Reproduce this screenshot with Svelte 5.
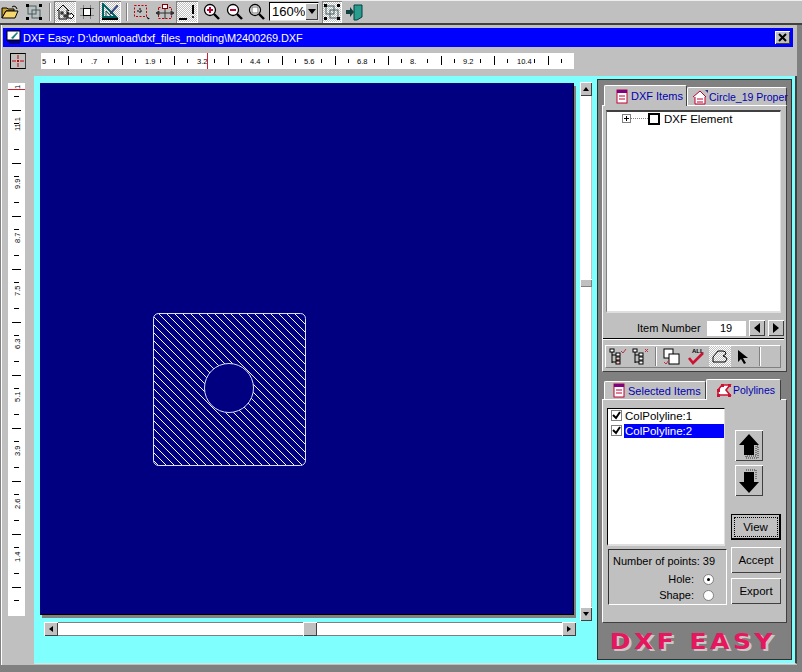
<script>
  // ruler data, all in px along the ruler
  const hLabels = [
    ['5', 1], ['.7', 50], ['1.9', 104], ['3.2', 156], ['4.4', 209], ['5.6', 263],
    ['6.8', 316], ['8.', 369], ['9.2', 422], ['10.4', 476]
  ];
  const hMajor = [27, 81, 133, 187, 241, 294, 347, 400, 453, 507];
  const vLabels = [
    ['1', 0], ['11.1', 42], ['9.9', 100], ['8.7', 154], ['7.5', 207], ['6.3', 260],
    ['5.1', 313], ['3.9', 367], ['2.6', 420], ['1.4', 473]
  ];
  const vMajor = [27, 80, 133, 186, 239, 292, 345, 398, 451, 504];
</script>

<div class="app">
  <div class="toolbar">
    <button class="tool" style="margin-left:1px" aria-label="open">
      <svg width="18" height="16" viewBox="0 0 18 16"><path d="M1 4h5l1 1h6v2H5L1 14z" fill="#c9a227" stroke="#000"/><path d="M1 14 5 7h12l-3 7z" fill="#f5d76e" stroke="#000"/><path d="M11 3q2-2 4 0l1 2" fill="none" stroke="#000"/></svg>
    </button>
    <button class="tool" style="margin-left:6px" aria-label="select">
      <svg width="18" height="18" viewBox="0 0 18 18"><rect x="3" y="3" width="8" height="8" fill="none" stroke="#406060"/><rect x="7" y="7" width="8" height="8" fill="none" stroke="#406060"/><path d="M1 1h3v3H1zM14 1h3v3h-3zM1 14h3v3H1zM14 14h3v3h-3z"/></svg>
    </button>
    <span class="sep"></span>
    <button class="tool pressed w22" style="margin-left:3px" aria-label="home">
      <svg width="18" height="18" viewBox="0 0 18 18"><path d="M1 8 7 2l6 6M3 7v9h8V7" fill="none" stroke="#000"/><rect x="5" y="9" width="2" height="2" fill="none" stroke="#000"/><rect x="8" y="12" width="2" height="2" fill="none" stroke="#000"/><path d="M12 9v2h3v-1l3 3-3 3v-1h-3z" fill="#fff" stroke="#000"/></svg>
    </button>
    <button class="tool" style="margin-left:2px" aria-label="crop">
      <svg width="14" height="14" viewBox="0 0 14 14"><rect x="3.5" y="3.5" width="7" height="7" fill="#fff" stroke="#000"/><path d="M0 3.5h3M11 3.5h3M0 10.5h3M11 10.5h3M3.5 0v3M10.5 0v3M3.5 11v3M10.5 11v3" stroke="#808080"/></svg>
    </button>
    <button class="tool pressed w22" style="margin-left:3px" aria-label="draft">
      <svg width="18" height="18" viewBox="0 0 18 18"><path d="M2 1v13h13z" fill="none" stroke="#006060" stroke-width="2"/><path d="M5 8v6h6z" fill="none" stroke="#006060"/><path d="M9 10 16 2l1 1-7 8z" fill="#3050c0" stroke="#000" stroke-width=".5"/><path d="M1 16h16" stroke="#000" stroke-width="2"/></svg>
    </button>
    <span class="sep" style="margin-left:5px"></span>
    <button class="tool" style="margin-left:5px" aria-label="region">
      <svg width="18" height="18" viewBox="0 0 18 18"><rect x="1.5" y="2.5" width="12" height="11" fill="none" stroke="#c00000" stroke-dasharray="2 1.5"/><path d="M7 5v6M4 8h6" stroke="#000" stroke-dasharray="2 1"/><path d="m13 13 4 3-2 0 1 2z"/></svg>
    </button>
    <button class="tool" style="margin-left:5px" aria-label="move">
      <svg width="18" height="18" viewBox="0 0 18 18"><rect x="2.5" y="4.5" width="13" height="11" fill="none" stroke="#c00000" stroke-dasharray="2 1.5"/><rect x="6.5" y="1.5" width="5" height="4" fill="#fff" stroke="#800000"/><path d="M0 10h18M9 6v10M0 10l3-2v4zM18 10l-3-2v4z" stroke="#303030" fill="#303030"/></svg>
    </button>
    <button class="tool pressed w22" style="margin-left:2px" aria-label="measure">
      <svg width="18" height="18" viewBox="0 0 18 18"><path d="M1 16h8" stroke="#000" stroke-width="2"/><path d="M15 2v9" stroke="#000" stroke-width="2"/><circle cx="15" cy="14" r="1" fill="#000"/></svg>
    </button>
    <button class="tool" style="margin-left:4px" aria-label="zoom in">
      <svg width="17" height="17" viewBox="0 0 17 17"><circle cx="7" cy="7" r="5.5" fill="#fff" stroke="#000" stroke-width="1.3"/><path d="M4 7h6M7 4v6" stroke="#c00030" stroke-width="2"/><path d="m11 11 5 5" stroke="#000" stroke-width="2.4"/></svg>
    </button>
    <button class="tool" style="margin-left:5px" aria-label="zoom out">
      <svg width="17" height="17" viewBox="0 0 17 17"><circle cx="7" cy="7" r="5.5" fill="#fff" stroke="#000" stroke-width="1.3"/><path d="M4 7h6" stroke="#c00030" stroke-width="2"/><path d="m11 11 5 5" stroke="#000" stroke-width="2.4"/></svg>
    </button>
    <button class="tool" style="margin-left:4px" aria-label="zoom fit">
      <svg width="17" height="17" viewBox="0 0 17 17"><circle cx="7" cy="7" r="5.5" fill="#fff" stroke="#000" stroke-width="1.3"/><rect x="4" y="4" width="6" height="6" fill="none" stroke="#707070"/><path d="m11 11 5 5" stroke="#000" stroke-width="2.4"/></svg>
    </button>
    <div class="combo">
      <span>160%</span>
      <i><b></b></i>
    </div>
    <button class="tool pressed w20" style="margin-left:3px" aria-label="select all">
      <svg width="18" height="18" viewBox="0 0 18 18"><rect x="3" y="3" width="8" height="8" fill="none" stroke="#406060"/><rect x="7" y="7" width="8" height="8" fill="none" stroke="#406060"/><path d="M1 1h3v3H1zM14 1h3v3h-3zM1 14h3v3H1zM14 14h3v3h-3z"/></svg>
    </button>
    <button class="tool" style="margin-left:3px" aria-label="exit">
      <svg width="18" height="18" viewBox="0 0 18 18"><path d="M9 2h8v12l-5 3H9z" fill="#2a9d8f" stroke="#004040"/><path d="M1 7h4V4l4 5-4 5v-3H1z" fill="#104040"/></svg>
    </button>
  </div>

  <div class="window">
    <div class="titlebar">
      <svg width="16" height="15" viewBox="0 0 16 15"><rect x="1" y="1" width="13" height="9" fill="#fff" stroke="#000"/><path d="M3 13h11M1 11h14" stroke="#000"/><path d="m5 8 6-6 1 1-5 6z" fill="#208080"/></svg>
      <span class="title-text">DXF Easy: D:\download\dxf_files_molding\M2400269.DXF</span>
      <button class="close" aria-label="close">
        <svg width="9" height="9" viewBox="0 0 9 9"><path d="m1 1 7 7M8 1 1 8" stroke="#000" stroke-width="2"/></svg>
      </button>
    </div>

    <div class="rulerbar">
      <button class="corner" aria-label="origin">
        <svg width="14" height="14" viewBox="0 0 14 14"><path d="M7 1v4M7 9v4M1 7h4M9 7h4" stroke="#c00000"/><rect x="6" y="6" width="2" height="2" fill="#c00000"/></svg>
      </button>
      <svg class="hruler" width="533" height="16" viewBox="0 0 533 16">
        {#each hMajor as x}
          <path d="M{x + 0.5} 3v9M{x - 13.5} 6v4M{x + 13.5} 6v4" stroke="#000"/>
        {/each}
        {#each hLabels as [label, x]}
          <text x={x} y="11">{label}</text>
        {/each}
        <path d="M166.5 0v16" stroke="#d02030"/>
      </svg>
    </div>

    <div class="main">
      <div class="vruler-col">
        <svg class="vruler" width="17" height="533" viewBox="0 0 17 533">
          {#each vMajor as y}
            <path d="M4 {y + 0.5}h9M6 {y - 13.5}h5M6 {y + 13.5}h5" stroke="#000"/>
          {/each}
          {#each vLabels as [label, y]}
            <text transform="translate(12 {y + 6}) rotate(-90)">{label}</text>
          {/each}
          <path d="M0 6.5h17" stroke="#d02030"/>
        </svg>
      </div>

      <div class="cyan">
        <div class="work">
          <div class="work-top">
            <div class="canvas">
              <svg width="534" height="532" viewBox="0 0 534 532">
                <defs>
                  <pattern id="hatch" patternUnits="userSpaceOnUse" width="8" height="8">
                    <path d="M0 0 8 8" stroke="#fff" stroke-width="1" shape-rendering="crispEdges"/>
                  </pattern>
                </defs>
                <rect x="113.5" y="230.5" width="152" height="152" rx="5" fill="url(#hatch)" stroke="#d8dcff"/>
                <circle cx="189" cy="305" r="24.5" fill="#000080" stroke="#d8dcff"/>
              </svg>
            </div>
            <div class="vscroll">
              <button class="sb" aria-label="up"><b class="up"></b></button>
              <div class="track"><span class="vthumb"></span></div>
              <button class="sb" aria-label="down"><b class="down"></b></button>
            </div>
          </div>
          <div class="hscroll">
            <button class="sb" aria-label="left"><b class="left"></b></button>
            <div class="track row"><span class="hthumb"></span></div>
            <button class="sb" aria-label="right"><b class="right"></b></button>
          </div>
        </div>

        <div class="side">
          <div class="tabs top-tabs">
            <div class="tab active first">
              <svg width="12" height="15" viewBox="0 0 12 15"><rect x="1" y="1" width="10" height="13" fill="#fff" stroke="#c00030"/><rect x="1" y="1" width="10" height="3" fill="#800080"/><path d="M3 7h6M3 10h6" stroke="#c00030"/></svg>
              <span>DXF Items</span>
            </div>
            <div class="tab second">
              <svg width="17" height="16" viewBox="0 0 17 16"><path d="M1 8 8 2l6 6M3 8v7h10V8" fill="#fff" stroke="#c00030"/><path d="M5 10h6M5 13h6" stroke="#c00030"/><path d="m13 1 3 0 0 3z" fill="#303080"/></svg>
              <span>Circle_19 Proper</span>
            </div>
          </div>
          <div class="card items">
            <div class="tree">
              <span class="expander"></span>
              <span class="dots"></span>
              <span class="treecheck"></span>
              <span>DXF Element</span>
            </div>
            <div class="numrow">
              <span>Item Number</span>
              <span class="numbox">19</span>
              <button class="btn step" aria-label="prev"><b class="left big"></b></button>
              <button class="btn step gap4" aria-label="next"><b class="right big"></b></button>
            </div>
            <div class="rule"></div>
            <div class="minibar">
              <span class="mini" style="margin-left:3px">
                <svg width="18" height="18" viewBox="0 0 18 18"><path d="M3 3v12M3 7h5M3 14h5M8 10v4" stroke="#000"/><rect x="1" y="1" width="4" height="3" fill="#fff" stroke="#000"/><rect x="7" y="5" width="4" height="3" fill="#fff" stroke="#000"/><rect x="7" y="9" width="4" height="3" fill="#fcc" stroke="#000"/><rect x="7" y="13" width="4" height="3" fill="#fcc" stroke="#000"/><path d="m12 3 2 2 3-4" fill="none" stroke="#c03040"/></svg>
              </span>
              <span class="mini" style="margin-left:5px">
                <svg width="18" height="18" viewBox="0 0 18 18"><path d="M3 3v12M3 7h5M3 14h5" stroke="#000"/><rect x="1" y="1" width="4" height="3" fill="#fff" stroke="#000"/><rect x="7" y="5" width="4" height="3" fill="#fff" stroke="#000"/><rect x="7" y="9" width="4" height="3" fill="#fff" stroke="#000"/><rect x="7" y="13" width="4" height="3" fill="#fff" stroke="#000"/><path d="m13 1 3 3M16 1l-3 3" stroke="#c03040"/></svg>
              </span>
              <span class="msep" style="margin-left:5px"></span>
              <span class="mini" style="margin-left:6px">
                <svg width="18" height="18" viewBox="0 0 18 18"><rect x="1" y="1" width="9" height="9" fill="#fff" stroke="#000"/><rect x="6" y="6" width="10" height="10" fill="#fff" stroke="#000"/><path d="m1 14 2 2 3-4" fill="none" stroke="#c03040"/></svg>
              </span>
              <span class="mini" style="margin-left:6px">
                <svg width="18" height="18" viewBox="0 0 18 18"><text x="5" y="5" class="all">ALL</text><path d="m2 10 4 5 10-10" fill="none" stroke="#d01030" stroke-width="2.6"/></svg>
              </span>
              <span class="mini pressed-mini" style="margin-left:4px">
                <svg width="18" height="16" viewBox="0 0 18 16"><path d="M2 13V8l5-6h5q3 0 3 3l-3 2q4 1 4 3l-2 3z" fill="none" stroke="#000"/></svg>
              </span>
              <span class="mini" style="margin-left:6px">
                <svg width="14" height="16" viewBox="0 0 14 16"><path d="M1 1v12l3-3 3 5 2-1-3-5h5z"/></svg>
              </span>
              <span class="msep" style="margin-left:8px"></span>
            </div>
          </div>

          <div class="tabs low-tabs">
            <div class="tab selected-tab">
              <svg width="12" height="15" viewBox="0 0 12 15"><rect x="1" y="1" width="10" height="13" fill="#fff" stroke="#c00030"/><rect x="1" y="1" width="10" height="3" fill="#800080"/><path d="M3 7h6M3 10h6" stroke="#c00030"/></svg>
              <span>Selected Items</span>
            </div>
            <div class="tab active poly-tab">
              <svg width="16" height="15" viewBox="0 0 16 15"><path d="M2 12V7l4-5h8l-4 5 4 5z" fill="#fff" stroke="#d01030" stroke-width="1.6"/><path d="M1 6h3v3H1zM5 1h3v3H5zM12 1h3v3h-3zM1 11h3v3H1zM12 11h3v3h-3z" fill="#d01030"/></svg>
              <span>Polylines</span>
            </div>
          </div>
          <div class="card polys">
            <div class="poly-left">
              <div class="listbox">
                <div class="listrow"><span class="check"><svg width="9" height="9" viewBox="0 0 9 9"><path d="m1 4 3 3 4-6" fill="none" stroke="#000" stroke-width="2"/></svg></span><span class="lbl">ColPolyline:1</span></div>
                <div class="listrow"><span class="check"><svg width="9" height="9" viewBox="0 0 9 9"><path d="m1 4 3 3 4-6" fill="none" stroke="#000" stroke-width="2"/></svg></span><span class="lbl on">ColPolyline:2</span></div>
              </div>
              <div class="info">
                <div>Number of points: 39</div>
                <div class="opt hole"><span>Hole:</span><i class="radio dot"></i></div>
                <div class="opt"><span>Shape:</span><i class="radio"></i></div>
              </div>
            </div>
            <div class="poly-right">
              <button class="btn arrow" aria-label="move up">
                <svg width="22" height="26" viewBox="0 0 22 26"><path d="M11 1 1 12h5v10h10V12h5z"/><path d="M18 13v10H8v2h12V13z" fill="none" stroke="#303030" stroke-dasharray="1 1"/></svg>
              </button>
              <button class="btn arrow" style="margin-top:4px" aria-label="move down">
                <svg width="22" height="26" viewBox="0 0 22 26"><path d="M11 25 1 14h5V4h10v10h5z"/><path d="M8 2h10v10" fill="none" stroke="#303030" stroke-dasharray="1 1"/></svg>
              </button>
              <button class="btn text default"><span>View</span></button>
              <button class="btn text" style="margin-top:7px">Accept</button>
              <button class="btn text" style="margin-top:5px">Export</button>
            </div>
          </div>
          <div class="logo"><span>DXF EASY</span></div>
        </div>
      </div>
    </div>
  </div>
</div>

<style>
  :global(body) {
    margin: 0;
    background: #808080;
  }

  .app {
    width: 802px;
    height: 672px;
    overflow: hidden;
    background: #808080;
    font-family: "Liberation Sans", Arial, sans-serif;
    font-size: 11px;
    color: #000;
  }

  button {
    font: inherit;
    color: inherit;
    padding: 0;
    margin: 0;
    background: #c0c0c0;
    border: 0;
    display: flex;
    align-items: center;
    justify-content: center;
  }

  svg { flex: none; }

  .toolbar {
    height: 23px;
    display: flex;
    align-items: center;
    background: #c0c0c0;
    border-bottom: 2px solid #404040;
    box-shadow: inset 0 1px #eee;
  }
  .tool {
    width: 18px;
    height: 22px;
    background: transparent;
  }
  .tool.pressed {
    background: repeating-conic-gradient(#fff 0 25%, #c0c0c0 0 50%) 0 0 / 2px 2px;
    box-shadow: inset 1px 1px #808080, inset -1px -1px #fff;
  }
  .w22 { width: 22px; }
  .w20 { width: 20px; }
  .sep {
    width: 1px;
    height: 18px;
    margin-left: 6px;
    background: #808080;
    border-right: 1px solid #fff;
  }
  .combo {
    margin-left: 4px;
    width: 50px;
    height: 19px;
    box-sizing: border-box;
    background: #fff;
    border: 1px solid #000;
    border-right-color: #dfdfdf;
    border-bottom-color: #dfdfdf;
    display: flex;
    align-items: center;
    font-size: 13px;
    padding-left: 2px;
  }
  .combo span { flex: 1; }
  .combo i {
    width: 14px;
    height: 17px;
    background: #c0c0c0;
    box-shadow: inset 1px 1px #fff, inset -1px -1px #404040;
    display: flex;
    align-items: center;
    justify-content: center;
  }
  .combo b {
    border: 4px solid transparent;
    border-top: 5px solid #000;
    border-bottom: 0;
  }

  .window {
    width: 796px;
    height: 640px;
    padding-top: 3px;
    box-sizing: border-box;
    background: #c0c0c0;
    border-left: 1px solid #fff;
    margin-left: 1px;
    display: flex;
    flex-direction: column;
  }
  .titlebar {
    width: 790px;
    margin-left: 1px;
    height: 19px;
    background: #0000ff;
    color: #fff;
    display: flex;
    align-items: center;
    padding-left: 3px;
    box-sizing: border-box;
    flex: none;
  }
  .title-text {
    margin-left: 1px;
    flex: 1;
    letter-spacing: -.1px;
  }
  .close {
    width: 15px;
    height: 13px;
    margin-right: 3px;
    box-shadow: inset 1px 1px #fff, inset -1px -1px #404040;
  }

  .rulerbar {
    height: 29px;
    flex: none;
    display: flex;
    align-items: flex-start;
    padding-top: 6px;
    box-sizing: border-box;
  }
  .corner {
    width: 16px;
    height: 16px;
    margin-left: 8px;
    border: 1px solid #000;
    border-right-color: #404040;
    box-sizing: border-box;
  }
  .hruler {
    margin-left: 15px;
    background: #fff;
    display: block;
  }
  text {
    font-family: "Liberation Sans", Arial, sans-serif;
    font-size: 7.5px;
  }
  text.all {
    font-size: 6px;
    font-weight: bold;
  }

  .main {
    flex: 1;
    display: flex;
    min-height: 0;
  }
  .vruler-col {
    width: 32px;
    flex: none;
    padding-top: 7px;
    padding-left: 6px;
    box-sizing: border-box;
  }
  .vruler {
    background: #fff;
    display: block;
  }

  .cyan {
    width: 761px;
    height: 587px;
    background: #80ffff;
    display: flex;
    flex: none;
    border-bottom: 1px solid #d0e8e8;
    border-right: 2px solid #404040;
    box-sizing: content-box;
  }
  .work {
    width: 563px;
    flex: none;
    padding-top: 6px;
    box-sizing: border-box;
  }
  .work-top {
    display: flex;
    height: 540px;
  }
  .canvas {
    width: 534px;
    height: 532px;
    margin: 1px 0 0 6px;
    background: #000080;
    border-right: 1px solid #000;
    border-bottom: 1px solid #000;
    box-shadow: 2px 3px 0 #808080;
    box-sizing: border-box;
    flex: none;
  }
  .canvas svg { display: block; }

  .vscroll {
    width: 12px;
    height: 539px;
    margin-left: 6px;
    display: flex;
    flex-direction: column;
    flex: none;
  }
  .track {
    flex: 1;
    background: #fff;
    position: relative;
    box-shadow: inset -1px 0 #c0c0c0;
  }
  .track.row {
    box-shadow: inset 0 -1px #808080, inset 0 1px #808080;
  }
  .vthumb {
    display: block;
    height: 8px;
    margin-top: 183px;
    background: #c0c0c0;
    box-shadow: inset 1px 1px #fff, inset -1px -1px #808080;
  }
  .hscroll {
    margin-left: 10px;
    width: 532px;
    height: 14px;
    display: flex;
  }
  .hthumb {
    display: block;
    width: 14px;
    height: 14px;
    margin-left: 245px;
    background: #c0c0c0;
    box-shadow: inset 1px 1px #fff, inset -1px -1px #404040;
  }
  .sb {
    flex: none;
    width: 14px;
    height: 14px;
    box-shadow: inset 1px 1px #fff, inset -1px -1px #404040;
  }
  .vscroll .sb { width: 12px; }
  b.up, b.down, b.left, b.right {
    display: block;
    width: 0;
    height: 0;
    border: 3px solid transparent;
  }
  b.up { border-top: 0; border-bottom: 4px solid #000; }
  b.down { border-bottom: 0; border-top: 4px solid #000; }
  b.left { border-left: 0; border-right: 4px solid #000; }
  b.right { border-right: 0; border-left: 4px solid #000; }
  b.left.big { border-width: 5px 6px 5px 0; border-color: transparent #000 transparent transparent; }
  b.right.big { border-width: 5px 0 5px 6px; border-color: transparent transparent transparent #000; }

  .side {
    width: 195px;
    height: 581px;
    margin-top: 3px;
    background: #808080;
    border: 1px solid #303030;
    box-sizing: border-box;
    padding: 0 4px;
    flex: none;
    position: relative;
  }
  .tabs {
    display: flex;
    align-items: flex-end;
    color: #0000b0;
  }
  .top-tabs {
    height: 25px;
  }
  .low-tabs {
    height: 20px;
    margin-top: 7px;
  }
  .tab {
    box-sizing: border-box;
    display: flex;
    align-items: center;
    background: #c0c0c0;
    border-top: 1px solid #fff;
    border-left: 1px solid #fff;
    border-right: 1px solid #404040;
    border-radius: 2px 2px 0 0;
    white-space: nowrap;
    flex: none;
  }
  .first {
    width: 83px;
    height: 21px;
    margin-left: 2px;
    padding-left: 11px;
    gap: 3px;
    position: relative;
    z-index: 1;
    margin-bottom: -1px;
  }
  .second {
    width: 100px;
    height: 18px;
    padding-left: 4px;
    font-size: 10.5px;
  }
  .selected-tab {
    width: 102px;
    height: 18px;
    margin-left: 2px;
    padding-left: 8px;
    gap: 3px;
  }
  .poly-tab {
    width: 75px;
    height: 21px;
    padding-left: 9px;
    gap: 1px;
    position: relative;
    z-index: 1;
    margin-bottom: -1px;
    font-size: 10.5px;
  }
  .card {
    width: 185px;
    box-sizing: border-box;
    background: #c0c0c0;
    border-top: 1px solid #fff;
    border-left: 1px solid #fff;
    border-right: 1px solid #404040;
    border-bottom: 1px solid #404040;
  }
  .items {
    height: 267px;
    padding: 4px 0 0 3px;
  }
  .tree {
    width: 175px;
    height: 203px;
    box-sizing: border-box;
    background: #fff;
    border-top: 2px solid #404040;
    border-left: 1px solid #808080;
    border-right: 1px solid #dfdfdf;
    border-bottom: 2px solid #dfdfdf;
    padding: 1px 0 0 15px;
    display: flex;
    align-items: flex-start;
    line-height: 12px;
    font-size: 11.5px;
  }
  .expander {
    width: 7px;
    height: 7px;
    margin-top: 1px;
    border: 1px solid #808080;
    background:
      linear-gradient(#000, #000) center / 5px 1px no-repeat,
      linear-gradient(#000, #000) center / 1px 5px no-repeat;
  }
  .dots {
    width: 17px;
    margin-top: 5px;
    border-top: 1px dotted #808080;
  }
  .treecheck {
    width: 8px;
    height: 8px;
    border: 2px solid #000;
    background: #fff;
    margin-right: 4px;
  }
  .numrow {
    display: flex;
    align-items: center;
    height: 16px;
    margin-top: 7px;
    padding-left: 31px;
    white-space: nowrap;
  }
  .numbox {
    width: 39px;
    height: 15px;
    margin-left: 6px;
    background: #fff;
    text-align: center;
    line-height: 14px;
    font-size: 11px;
  }
  .step {
    width: 16px;
    height: 16px;
    margin-left: 3px;
  }
  .gap4 { margin-left: 3px; }
  .rule {
    height: 1px;
    margin: 2px 2px 0 -3px;
    background: #000;
    border-bottom: 1px solid #fff;
  }
  .minibar {
    width: 176px;
    height: 23px;
    margin: 5px 0 0 -1px;
    box-sizing: border-box;
    display: flex;
    align-items: center;
    border: 1px solid;
    border-color: #fff #808080 #808080 #fff;
  }
  .mini {
    display: flex;
    align-items: center;
    justify-content: center;
    flex: none;
  }
  .pressed-mini {
    width: 22px;
    height: 21px;
    background: repeating-conic-gradient(#fff 0 25%, #c0c0c0 0 50%) 0 0 / 2px 2px;
  }
  .msep {
    width: 1px;
    height: 19px;
    background: #808080;
    border-right: 1px solid #fff;
  }
  .btn {
    box-sizing: border-box;
    box-shadow: inset 1px 1px #fff, inset -1px -1px #404040;
  }

  .polys {
    height: 224px;
    display: flex;
    padding: 8px 0 0 4px;
  }
  .poly-left {
    width: 120px;
    flex: none;
  }
  .listbox {
    width: 118px;
    height: 138px;
    box-sizing: border-box;
    background: #fff;
    border: 1px solid #000;
    border-right-color: #dfdfdf;
    border-bottom: 2px solid #dfdfdf;
  }
  .listrow {
    display: flex;
    align-items: center;
    height: 15px;
    padding-left: 3px;
    position: relative;
    top: -1px;
    font-size: 11.5px;
  }
  .check {
    width: 9px;
    height: 9px;
    border: 1px solid #808080;
    display: block;
    margin-right: 2px;
    background: #fff;
  }
  .check svg { display: block; }
  .lbl {
    flex: 1;
    padding-left: 1px;
    line-height: 14px;
  }
  .lbl.on {
    background: #0000ff;
    color: #fff;
  }
  .info {
    margin: 3px 0 0 1px;
    width: 119px;
    height: 56px;
    box-sizing: border-box;
    border: 1px solid;
    border-color: #303030 #fff #fff #303030;
    padding: 4px 0 0 4px;
    line-height: 15px;
  }
  .opt {
    display: flex;
    justify-content: flex-end;
    align-items: center;
    padding-right: 12px;
    margin-top: 1px;
  }
  .opt.hole { margin-top: 3px; }
  .radio {
    width: 11px;
    height: 11px;
    margin-left: 9px;
    border-radius: 50%;
    background: #fff;
    box-sizing: border-box;
    border: 1px solid #808080;
    position: relative;
  }
  .radio.dot::after {
    content: "";
    position: absolute;
    left: 3px;
    top: 3px;
    width: 3px;
    height: 3px;
    border-radius: 50%;
    background: #000;
  }
  .poly-right {
    display: flex;
    flex-direction: column;
    align-items: flex-end;
    width: 50px;
    margin-left: 4px;
  }
  .arrow {
    width: 28px;
    height: 31px;
    margin: 22px 18px 0 0;
  }
  .arrow + .arrow { margin-top: 4px; }
  .text {
    width: 50px;
    height: 26px;
    font-size: 11.5px;
  }
  .default {
    margin-top: 18px;
    box-shadow: none;
    border: 1px solid #000;
    border-right-width: 2px;
    border-bottom-width: 2px;
  }
  .default span {
    width: 44px;
    height: 20px;
    line-height: 18px;
    box-sizing: border-box;
    text-align: center;
    border: 1px dotted #000;
  }
  .logo {
    margin-top: 6px;
    padding-right: 4px;
    text-align: center;
    font-family: "DejaVu Sans", sans-serif;
    font-weight: bold;
    font-size: 22px;
    line-height: 26px;
    letter-spacing: 3px;
    color: #e8175d;
    text-shadow: 2px 2px 0 #c8c8c8;
    white-space: nowrap;
  }
  .logo span {
    display: inline-block;
    transform: scaleX(1.14);
  }
</style>
